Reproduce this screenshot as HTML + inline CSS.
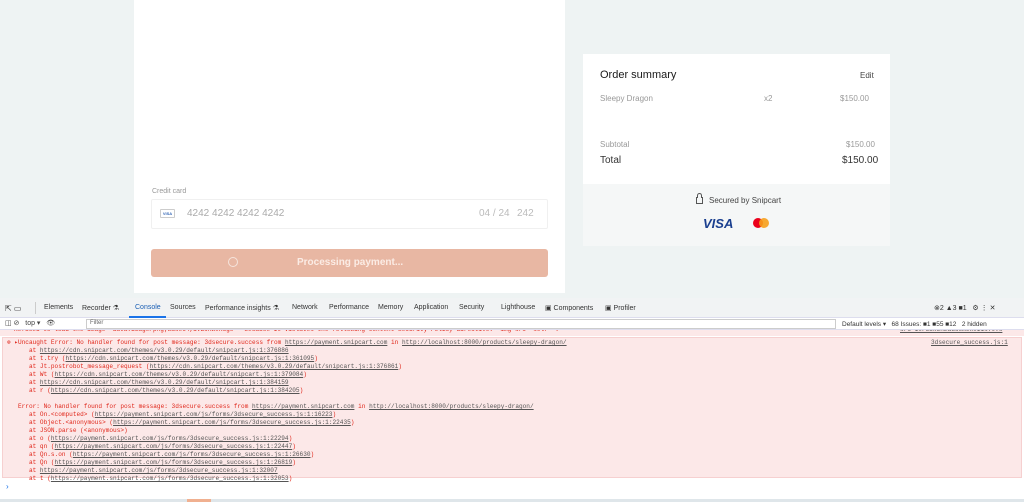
<!DOCTYPE html>
<html><head><style>
*{margin:0;padding:0;box-sizing:border-box}
body{width:1024px;height:502px;overflow:hidden;background:#eef3f3;font-family:"Liberation Sans",sans-serif;position:relative}
.abs{position:absolute}
.mono{font-family:"Liberation Mono",monospace;font-size:6.1px;color:#e0271b;white-space:pre;line-height:8px}
.mono u{color:#555;text-decoration:underline}
.tab{position:absolute;top:304px;font-size:7px;color:#333}
</style></head><body>
<div class="abs" style="left:134px;top:0;width:431px;height:293px;background:#fff"></div>
<div class="abs" style="left:152px;top:188px;font-size:7px;color:#999">Credit card</div>
<div class="abs" style="left:151px;top:199px;width:397px;height:30px;border:1px solid #f0f0f0;border-radius:2px"></div>
<div class="abs" style="left:160px;top:209px;width:15px;height:9px;border:1px solid #ccc;border-radius:1px;font-size:4px;color:#3a6bb8;text-align:center;line-height:7px;font-weight:bold">VISA</div>
<div class="abs" style="left:187px;top:208px;font-size:10px;color:#aaa">4242 4242 4242 4242</div>
<div class="abs" style="left:479px;top:208px;font-size:10px;color:#bbb">04 / 24</div>
<div class="abs" style="left:517px;top:208px;font-size:10px;color:#bbb">242</div>
<div class="abs" style="left:151px;top:249px;width:397px;height:28px;background:#e8b7a3;border-radius:3px"></div>
<div class="abs" style="left:228px;top:257px;width:10px;height:10px;border:1.5px solid #f5e4dc;border-radius:50%"></div>
<div class="abs" style="left:297px;top:257px;font-size:10px;font-weight:bold;color:#fbece5">Processing payment...</div>

<div class="abs" style="left:583px;top:54px;width:307px;height:192px;background:#fff"></div>
<div class="abs" style="left:583px;top:184px;width:307px;height:62px;background:#f5f7f7"></div>
<div class="abs" style="left:600px;top:69px;font-size:11px;color:#1a1a1a">Order summary</div>
<div class="abs" style="left:860px;top:71px;font-size:8px;color:#444">Edit</div>
<div class="abs" style="left:600px;top:94px;font-size:8px;color:#999">Sleepy Dragon</div>
<div class="abs" style="left:764px;top:94px;font-size:8px;color:#999">x2</div>
<div class="abs" style="left:840px;top:94px;font-size:8px;color:#999">$150.00</div>
<div class="abs" style="left:600px;top:140px;font-size:8px;color:#999">Subtotal</div>
<div class="abs" style="left:846px;top:140px;font-size:8px;color:#999">$150.00</div>
<div class="abs" style="left:600px;top:155px;font-size:10px;color:#333">Total</div>
<div class="abs" style="left:842px;top:155px;font-size:10px;color:#333">$150.00</div>
<div class="abs" style="left:696px;top:197px;width:7px;height:7px;border:1px solid #555;border-top:none"></div>
<div class="abs" style="left:697px;top:193px;width:5px;height:5px;border:1px solid #555;border-bottom:none;border-radius:3px 3px 0 0"></div>
<div class="abs" style="left:709px;top:196px;font-size:8px;color:#444">Secured by Snipcart</div>
<div class="abs" style="left:703px;top:216px;font-size:13px;font-weight:bold;font-style:italic;color:#1a3f8f">VISA</div>
<div class="abs" style="left:753px;top:218px;width:10px;height:10px;border-radius:50%;background:#eb001b"></div>
<div class="abs" style="left:759px;top:218px;width:10px;height:10px;border-radius:50%;background:#f79e1b;opacity:.9"></div>

<div class="abs" style="left:0;top:298px;width:1024px;height:204px;background:#fff"></div>
<div class="abs" style="left:0;top:298px;width:1024px;height:20px;background:#f1f3f4;border-bottom:1px solid #dde"></div>
<div class="tab" style="left:5px;font-size:8px">⇱ ▭</div>
<div class="abs" style="left:35px;top:302px;width:1px;height:12px;background:#ccc"></div>
<div class="tab" style="left:44px">Elements</div>
<div class="tab" style="left:82px">Recorder ⚗</div>
<div class="tab" style="left:135px;color:#1a5fb4">Console</div>
<div class="abs" style="left:129px;top:316px;width:37px;height:2px;background:#1a73e8"></div>
<div class="tab" style="left:170px">Sources</div>
<div class="tab" style="left:205px">Performance insights ⚗</div>
<div class="tab" style="left:292px">Network</div>
<div class="tab" style="left:329px">Performance</div>
<div class="tab" style="left:378px">Memory</div>
<div class="tab" style="left:414px">Application</div>
<div class="tab" style="left:459px">Security</div>
<div class="tab" style="left:501px">Lighthouse</div>
<div class="tab" style="left:545px">▣ Components</div>
<div class="tab" style="left:605px">▣ Profiler</div>
<div class="tab" style="left:934px">⊗2 ▲3 ■1 &nbsp; ⚙ ⋮ ✕</div>
<div class="abs" style="left:0;top:318px;width:1024px;height:12px;background:#fff;border-bottom:1px solid #dde"></div>
<div class="abs" style="left:5px;top:319px;font-size:7px;color:#444">◫ ⊘ &nbsp; top ▾ &nbsp; 👁</div>
<div class="abs" style="left:86px;top:319px;width:750px;height:10px;border:1px solid #ccc;font-size:6px;color:#666;padding-left:3px">Filter</div>
<div class="abs" style="left:842px;top:320px;font-size:6.5px;color:#333">Default levels ▾ &nbsp; 68 Issues: ■1 ■55 ■12 &nbsp; 2 hidden</div>
<div class="abs" style="left:0;top:330px;width:1024px;height:6px;background:#fce8e8;overflow:hidden"><div class="mono" style="position:absolute;left:14px;top:-4px">Refused to load the image 'data:image/png;base64,iVBORw0KGgo=' because it violates the following Content Security Policy directive: "img-src 'self'".</div><div class="mono" style="position:absolute;left:900px;top:-4px"><u>src 10/3bx5hzaucom9x0i1s7t.s</u></div></div>
<div class="abs" style="left:2px;top:337px;width:1020px;height:141px;background:#fce8e8;border:1px solid #f6d0d0"></div>
<div class="abs mono" style="left:7px;top:339px"><span style="color:#e0271b">⊗</span> ▸Uncaught Error: No handler found for post message: 3dsecure.success from <u>https://payment.snipcart.com</u> in <u>http://localhost:8000/products/sleepy-dragon/</u>
      at <u>https://cdn.snipcart.com/themes/v3.0.29/default/snipcart.js:1:376886</u>
      at t.try (<u>https://cdn.snipcart.com/themes/v3.0.29/default/snipcart.js:1:361095</u>)
      at Jt.postrobot_message_request (<u>https://cdn.snipcart.com/themes/v3.0.29/default/snipcart.js:1:376861</u>)
      at Wt (<u>https://cdn.snipcart.com/themes/v3.0.29/default/snipcart.js:1:379084</u>)
      at <u>https://cdn.snipcart.com/themes/v3.0.29/default/snipcart.js:1:384159</u>
      at r (<u>https://cdn.snipcart.com/themes/v3.0.29/default/snipcart.js:1:384205</u>)

   Error: No handler found for post message: 3dsecure.success from <u>https://payment.snipcart.com</u> in <u>http://localhost:8000/products/sleepy-dragon/</u>
      at On.&lt;computed&gt; (<u>https://payment.snipcart.com/js/forms/3dsecure_success.js:1:16223</u>)
      at Object.&lt;anonymous&gt; (<u>https://payment.snipcart.com/js/forms/3dsecure_success.js:1:22435</u>)
      at JSON.parse (&lt;anonymous&gt;)
      at o (<u>https://payment.snipcart.com/js/forms/3dsecure_success.js:1:22294</u>)
      at qn (<u>https://payment.snipcart.com/js/forms/3dsecure_success.js:1:22447</u>)
      at Qn.s.on (<u>https://payment.snipcart.com/js/forms/3dsecure_success.js:1:26630</u>)
      at Qn (<u>https://payment.snipcart.com/js/forms/3dsecure_success.js:1:26819</u>)
      at <u>https://payment.snipcart.com/js/forms/3dsecure_success.js:1:32007</u>
      at t (<u>https://payment.snipcart.com/js/forms/3dsecure_success.js:1:32053</u>)</div>
<div class="abs mono" style="left:931px;top:339px"><u>3dsecure_success.js:1</u></div>
<div class="abs" style="left:6px;top:482px;font-size:8px;color:#1a73e8">›</div>
<div class="abs" style="left:0;top:499px;width:1024px;height:3px;background:#dfe6ea"></div>
<div class="abs" style="left:187px;top:499px;width:24px;height:3px;background:#f0b090"></div>
</body></html>
